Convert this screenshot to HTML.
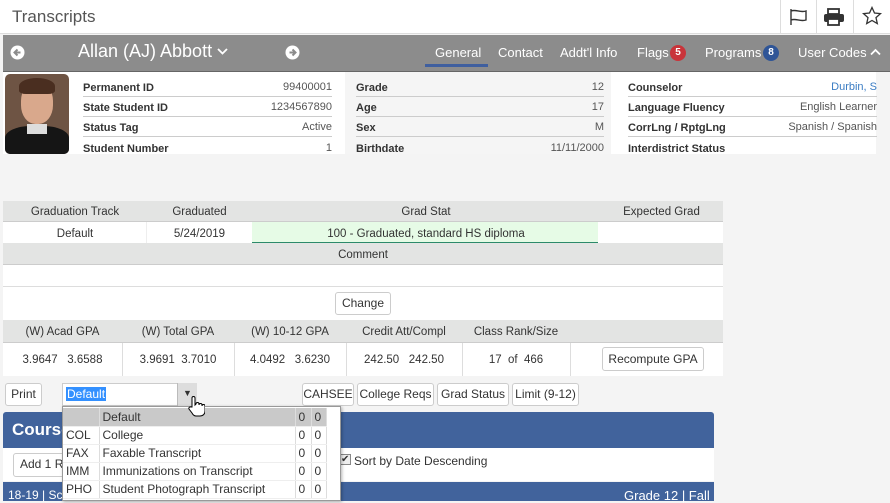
<!DOCTYPE html>
<html><head><meta charset="utf-8"><style>
*{box-sizing:border-box;margin:0;padding:0}
body{width:890px;height:501px;overflow:hidden;background:#f4f4f4;font-family:"Liberation Sans",sans-serif;color:#333;position:relative;font-size:12px}
.a{position:absolute}
.hdr{left:0;top:0;width:890px;height:34px;background:#fff;border-bottom:1px solid #ddd}
.bar{left:3px;top:35px;width:887px;height:37px;background:#8c8c8c;border-bottom:1px solid #666}
.tab{top:45px;color:#fff;font-size:13px}
.row{position:absolute;height:20px;border-bottom:1px solid #ccc;font-size:11px}
.row b{position:absolute;left:0;top:5px}
.row span{position:absolute;right:0;top:4px;color:#555}
.g{position:absolute;font-size:11.5px;color:#333;text-align:center}
.btn{position:absolute;height:23px;background:#fff;border:1px solid #ccc;border-radius:3px;font-size:12px;text-align:center;line-height:21px;color:#333}
.dd td{height:18px;font-size:12px;border-right:1px solid #ddd;border-bottom:1px solid #eee;padding-left:3px}
</style></head><body>
<div class="a hdr"></div>
<div class="a" style="left:12px;top:7px;font-size:17px;color:#555">Transcripts</div>
<div class="a" style="left:780px;top:0;width:1px;height:34px;background:#ddd"></div>
<div class="a" style="left:816px;top:0;width:1px;height:34px;background:#ddd"></div>
<div class="a" style="left:853px;top:0;width:1px;height:34px;background:#ddd"></div>
<svg class="a" style="left:789px;top:8px" width="20" height="18"><path d="M2 1v16M2 3c5-2 9 2 15 0v9c-6 2-10-2-15 0" fill="none" stroke="#333" stroke-width="1.4"/></svg>
<svg class="a" style="left:823px;top:8px" width="22" height="18"><rect x="5" y="1" width="11" height="5" fill="none" stroke="#333" stroke-width="1.8"/><rect x="1" y="6" width="20" height="8" rx="2" fill="#333"/><rect x="5" y="11" width="11" height="6" fill="#fff" stroke="#333" stroke-width="1.8"/></svg>
<svg class="a" style="left:862px;top:6px" width="20" height="20"><path d="M10 1.5l2.5 5.5 6 .6-4.5 4 1.3 6-5.3-3.1-5.3 3.1 1.3-6-4.5-4 6-.6z" fill="none" stroke="#333" stroke-width="1.3"/></svg>
<div class="a bar"></div>
<svg class="a" style="left:10px;top:45px" width="15" height="15"><circle cx="7.5" cy="7.5" r="7" fill="#fff"/><path d="M10.5 7.5H5M7.5 4.5l-3 3 3 3" stroke="#8c8c8c" stroke-width="2" fill="none"/></svg>
<div class="a" style="left:78px;top:41px;color:#fff;font-size:18px">Allan (AJ) Abbott</div>
<svg class="a" style="left:217px;top:48px" width="11" height="8"><path d="M1 1l4.5 4.5L10 1" stroke="#fff" stroke-width="1.8" fill="none"/></svg>
<svg class="a" style="left:285px;top:45px" width="15" height="15"><circle cx="7.5" cy="7.5" r="7" fill="#fff"/><path d="M4.5 7.5H10M7.5 4.5l3 3-3 3" stroke="#8c8c8c" stroke-width="2" fill="none"/></svg>
<div class="a tab" style="left:435px">General</div>
<div class="a" style="left:425px;top:64px;width:63px;height:3px;background:#3f5f9f"></div>
<div class="a tab" style="left:498px">Contact</div>
<div class="a tab" style="left:560px">Addt'l Info</div>
<div class="a tab" style="left:637px">Flags</div>
<div class="a" style="left:670px;top:45px;width:16px;height:16px;border-radius:8px;background:#c9343a;color:#fff;font-size:10px;font-weight:bold;text-align:center;line-height:16px">5</div>
<div class="a tab" style="left:705px">Programs</div>
<div class="a" style="left:763px;top:45px;width:16px;height:16px;border-radius:8px;background:#2f5597;color:#fff;font-size:10px;font-weight:bold;text-align:center;line-height:16px">8</div>
<div class="a tab" style="left:798px">User Codes</div>
<svg class="a" style="left:870px;top:48px" width="11" height="8"><path d="M1 6.5L5.5 2 10 6.5" stroke="#fff" stroke-width="1.8" fill="none"/></svg>
<div class="a" style="left:3px;top:72px;width:873px;height:82px;background:#fff"></div>
<div class="a" style="left:345px;top:72px;width:266px;height:82px;background:#f5f5f5"></div>
<div class="a" style="left:5px;top:74px;width:64px;height:80px;border-radius:5px;overflow:hidden;background:#6e5444">
<div class="a" style="left:16px;top:8px;width:32px;height:42px;border-radius:45%;background:#d9a88c"></div>
<div class="a" style="left:14px;top:4px;width:36px;height:16px;border-radius:50% 50% 20% 20%;background:#4a2e20"></div>
<div class="a" style="left:0;top:52px;width:64px;height:30px;border-radius:40% 40% 0 0;background:#151515"></div>
<div class="a" style="left:22px;top:50px;width:20px;height:10px;background:#ddd"></div>
</div>
<div class="row" style="left:83px;top:77px;width:249px"><b>Permanent ID</b><span>99400001</span></div>
<div class="row" style="left:83px;top:97px;width:249px"><b>State Student ID</b><span>1234567890</span></div>
<div class="row" style="left:83px;top:117px;width:249px"><b>Status Tag</b><span>Active</span></div>
<div class="row" style="left:83px;top:138px;width:249px;border:0"><b>Student Number</b><span>1</span></div>
<div class="row" style="left:356px;top:77px;width:248px"><b>Grade</b><span>12</span></div>
<div class="row" style="left:356px;top:97px;width:248px"><b>Age</b><span>17</span></div>
<div class="row" style="left:356px;top:117px;width:248px"><b>Sex</b><span>M</span></div>
<div class="row" style="left:356px;top:138px;width:248px;border:0"><b>Birthdate</b><span>11/11/2000</span></div>
<div class="row" style="left:628px;top:77px;width:249px"><b>Counselor</b><span style="color:#3a7cc3">Durbin, S</span></div>
<div class="row" style="left:628px;top:97px;width:249px"><b>Language Fluency</b><span>English Learner</span></div>
<div class="row" style="left:628px;top:117px;width:249px"><b>CorrLng / RptgLng</b><span>Spanish / Spanish</span></div>
<div class="row" style="left:628px;top:138px;width:249px;border:0"><b>Interdistrict Status</b></div>

<div class="a" style="left:3px;top:201px;width:720px;height:175px;background:#fff"></div>
<div class="a" style="left:3px;top:201px;width:720px;height:21px;background:#e3e4e3;border-bottom:1px solid #ccc"></div>
<div class="g" style="left:3px;top:206px;width:144px">Graduation Track</div>
<div class="g" style="left:147px;top:206px;width:105px">Graduated</div>
<div class="g" style="left:252px;top:206px;width:348px">Grad Stat</div>
<div class="g" style="left:600px;top:206px;width:123px">Expected Grad</div>
<div class="a" style="left:146px;top:222px;width:1px;height:21px;background:#eee"></div>
<div class="a" style="left:252px;top:222px;width:346px;height:21px;background:#e6fbe6;border-bottom:1px solid #2c8a6a"></div>
<div class="g" style="left:3px;top:228px;width:144px">Default</div>
<div class="g" style="left:147px;top:228px;width:105px">5/24/2019</div>
<div class="g" style="left:252px;top:228px;width:348px">100 - Graduated, standard HS diploma</div>
<div class="a" style="left:3px;top:243px;width:720px;height:22px;background:#e3e4e3;border-bottom:1px solid #ccc"></div>
<div class="g" style="left:3px;top:249px;width:720px">Comment</div>
<div class="a" style="left:3px;top:286px;width:720px;height:1px;background:#ddd"></div>
<div class="btn" style="left:335px;top:292px;width:56px">Change</div>
<div class="a" style="left:3px;top:320px;width:720px;height:23px;background:#e3e4e3;border-bottom:1px solid #ccc"></div>
<div class="g" style="left:3px;top:326px;width:119px">(W) Acad GPA</div>
<div class="g" style="left:122px;top:326px;width:112px">(W) Total GPA</div>
<div class="g" style="left:234px;top:326px;width:112px">(W) 10-12 GPA</div>
<div class="g" style="left:346px;top:326px;width:116px">Credit Att/Compl</div>
<div class="g" style="left:462px;top:326px;width:108px">Class Rank/Size</div>
<div class="g" style="left:3px;top:354px;width:119px">3.9647 &nbsp; 3.6588</div>
<div class="g" style="left:122px;top:354px;width:112px">3.9691 &nbsp;3.7010</div>
<div class="g" style="left:234px;top:354px;width:112px">4.0492 &nbsp; 3.6230</div>
<div class="g" style="left:346px;top:354px;width:116px">242.50 &nbsp; 242.50</div>
<div class="g" style="left:462px;top:354px;width:108px">17 &nbsp;of &nbsp;466</div>
<div class="a" style="left:122px;top:343px;width:1px;height:33px;background:#ddd"></div>
<div class="a" style="left:234px;top:343px;width:1px;height:33px;background:#ddd"></div>
<div class="a" style="left:346px;top:343px;width:1px;height:33px;background:#ddd"></div>
<div class="a" style="left:462px;top:343px;width:1px;height:33px;background:#ddd"></div>
<div class="a" style="left:570px;top:343px;width:1px;height:33px;background:#ddd"></div>
<div class="btn" style="left:602px;top:347px;width:102px;height:24px;line-height:22px">Recompute GPA</div>

<div class="btn" style="left:5px;top:383px;width:37px">Print</div>
<div class="a" style="left:62px;top:383px;width:135px;height:23px;background:#fff;border:1px solid #ccc"></div>
<div class="a" style="left:66px;top:387px;background:#3390ff;color:#fff;font-size:12px;padding:0 1px">Default</div>
<div class="a" style="left:177px;top:383px;width:20px;height:23px;background:#ddd;border-left:1px solid #bbb;text-align:center;font-size:9px;line-height:21px">▼</div>
<div class="btn" style="left:302px;top:383px;width:52px">CAHSEE</div>
<div class="btn" style="left:357px;top:383px;width:77px">College Reqs</div>
<div class="btn" style="left:437px;top:383px;width:72px">Grad Status</div>
<div class="btn" style="left:512px;top:383px;width:67px">Limit (9-12)</div>
<div class="a" style="left:3px;top:412px;width:711px;height:36px;background:#41639c;border-radius:3px 3px 0 0"></div>
<div class="a" style="left:12px;top:420px;color:#fff;font-size:17px;font-weight:bold">Course History</div>
<div class="a" style="left:3px;top:448px;width:711px;height:33px;background:#fff"></div>
<div class="btn" style="left:13px;top:453px;width:90px;height:24px;text-align:left;padding-left:6px">Add 1 Record</div>
<div class="a" style="left:340px;top:454px;width:11px;height:11px;border:1px solid #888;background:#eee;font-size:10px;line-height:9px">✔</div>
<div class="a" style="left:354px;top:454px;font-size:12px">Sort by Date Descending</div>
<div class="a" style="left:3px;top:482px;width:711px;height:19px;background:#41639c"></div>
<div class="a" style="left:8px;top:488px;color:#fff;font-size:12px">18-19 | School</div>
<div class="a" style="left:624px;top:488px;color:#fff;font-size:13px">Grade 12 | Fall</div>
<div class="a" style="left:62px;top:406px;width:279px;height:95px;background:#fff;border:1px solid #999;box-shadow:1px 1px 3px rgba(0,0,0,.3)">
<table class="dd" style="border-collapse:collapse;width:264px;margin-top:1px">
<tr style="background:#c9c9c9"><td style="width:36px"></td><td style="width:196px">Default</td><td style="width:16px">0</td><td>0</td></tr>
<tr><td>COL</td><td>College</td><td>0</td><td>0</td></tr>
<tr><td>FAX</td><td>Faxable Transcript</td><td>0</td><td>0</td></tr>
<tr><td>IMM</td><td>Immunizations on Transcript</td><td>0</td><td>0</td></tr>
<tr><td>PHO</td><td>Student Photograph Transcript</td><td>0</td><td>0</td></tr>
</table></div>
<svg class="a" style="left:187px;top:395px" width="18" height="24"><path d="M5 12V3a1.5 1.5 0 013 0v7l1-1a1.5 1.5 0 013 0v1a1.5 1.5 0 013 0v1a1.5 1.5 0 013 0v5c0 3-2 5-5 5H9c-2 0-3-1-4-3l-3-4a1.5 1.5 0 012-2z" fill="#fff" stroke="#000" stroke-width="1"/></svg>
</body></html>
